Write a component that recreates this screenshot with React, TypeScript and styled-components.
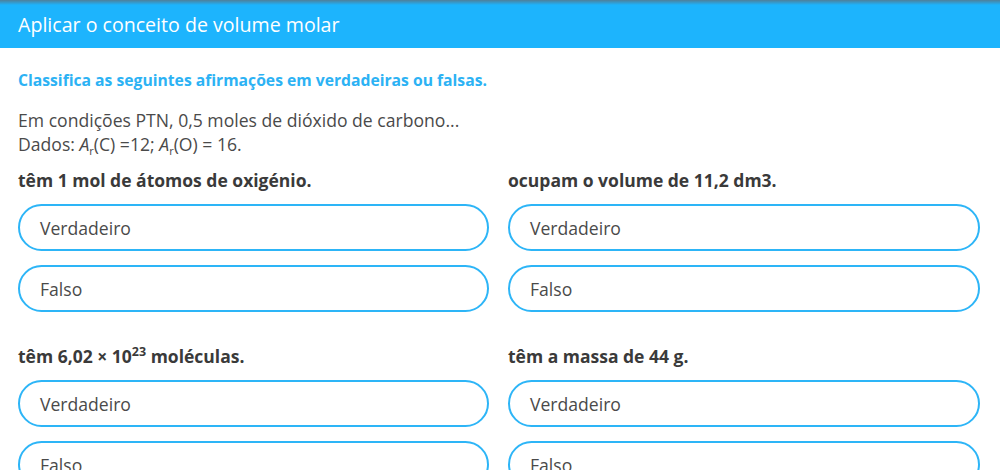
import React from "react"
import styled, { createGlobalStyle } from "styled-components"

const GlobalStyle = createGlobalStyle`
    body {
        margin: 0;
        background: #ffffff;
        font-family: "Open Sans", "Noto Sans", sans-serif;
    }
`;

const Page = styled.div`
    width: 1000px;
    height: 470px;
    overflow: hidden;
`;
const Header = styled.div`
    display: flex;
    align-items: center;
    height: 48px;
    padding: 0 18px;
    background: linear-gradient(to bottom, #4f7f99 0px, #1db4fd 5px, #1db4fd 100%);
`;
const Title = styled.h1`
    margin: 0;
    font-size: 19.6px;
    font-weight: 400;
    color: #ffffff;
`;
const Content = styled.div`
    padding: 21px 20px 0 18px;
`;
const Instruction = styled.p`
    margin: 0;
    font-size: 15.7px;
    line-height: 22px;
    font-weight: 700;
    color: #2cb2f4;
`;
const Statement = styled.p`
    margin: 17px 0 0 0;
    font-size: 17.6px;
    line-height: 24px;
    color: #4a4a4a;
`;
const Sub = styled.sub`
    font-size: 11px;
    vertical-align: -4px;
    line-height: 0;
`;
const Sup = styled.sup`
    font-size: 12.5px;
    vertical-align: 7px;
    line-height: 0;
`;
const Grid = styled.div`
    display: grid;
    grid-template-columns: 471px 472px;
    column-gap: 19px;
    row-gap: 32px;
    margin-top: 12px;
`;
const Question = styled.div`
    display: flex;
    flex-direction: column;
`;
const QuestionLabel = styled.div`
    font-size: 17.5px;
    line-height: 24px;
    font-weight: 700;
    color: #3a3a3a;
    margin-bottom: 12px;
`;
const Option = styled.button`
    display: flex;
    align-items: center;
    height: 47px;
    margin-bottom: 14px;
    padding: 0 0 0 20px;
    border: 2px solid #2db5f7;
    border-radius: 24px;
    background: #ffffff;
    font-family: "Open Sans", "Noto Sans", sans-serif;
    font-size: 17.6px;
    color: #4a4a4a;
    text-align: left;
    &:last-child {
        margin-bottom: 0;
    }
`;

const items = [
    { id: 1, label: <>têm 1 mol de átomos de oxigénio.</> },
    { id: 2, label: <>ocupam o volume de 11,2 dm3.</> },
    { id: 3, label: <>têm 6,02 × 10<Sup>23</Sup> moléculas.</> },
    { id: 4, label: <>têm a massa de 44 g.</> },
];

const App = () => {
    return (
        <Page>
            <GlobalStyle />
            <Header>
                <Title>Aplicar o conceito de volume molar</Title>
            </Header>
            <Content>
                <Instruction>Classifica as seguintes afirmações em verdadeiras ou falsas.</Instruction>
                <Statement>
                    Em condições PTN, 0,5 moles de dióxido de carbono...
                    <br />
                    Dados: <i>A</i><Sub>r</Sub>(C) =12; <i>A</i><Sub>r</Sub>(O) = 16.
                </Statement>
                <Grid>
                    {items.map((item) => (
                        <Question key={item.id}>
                            <QuestionLabel>{item.label}</QuestionLabel>
                            <Option>Verdadeiro</Option>
                            <Option>Falso</Option>
                        </Question>
                    ))}
                </Grid>
            </Content>
        </Page>
    );
}

export default App;
